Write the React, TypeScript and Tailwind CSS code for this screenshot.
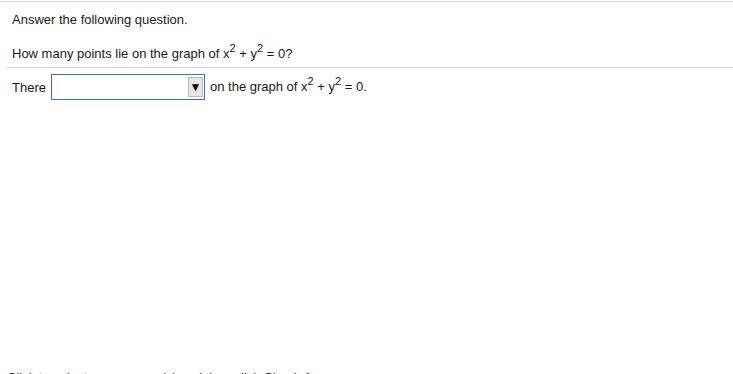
export default function App() {
  const sup = (t: string) => <sup className="text-[11px] relative -top-[1px] align-super leading-none">{t}</sup>;
  return (
    <div className="w-[733px] h-[374px] overflow-hidden bg-white text-[13px] text-[#1a1a1a]" style={{ fontFamily: '"Liberation Sans", Arial, sans-serif' }}>
      <div className="h-[1px] mt-[1px] bg-[#d3d3db]" />
      <div className="pl-[12px] pt-[10px] leading-[16px]">Answer the following question.</div>
      <div className="pl-[12px] pt-[16px] leading-[16px]">
        How many points lie on the graph of x{sup('2')} + y{sup('2')} = 0?
      </div>
      <div className="ml-[6px] mt-[5px] h-[1px] bg-[#d3d3db]" />
      <div className="flex items-center pl-[12px] pt-[6px]">
        <span>There</span>
        <div className="ml-[5px] w-[154px] h-[26px] border border-[#3a6fd0] flex items-center justify-end pr-[1px]">
          <div className="w-[15px] h-[20px] bg-[#e6e6e6] border border-[#b9b9b9] flex items-center justify-center text-[12px] text-black leading-none">
            ▼
          </div>
        </div>
        <span className="ml-[5px]">on the graph of x{sup('2')} + y{sup('2')} = 0.</span>
      </div>
      <div className="pl-[7px] mt-[270px] leading-[16px]">Click to select your answer(s) and then click Check Answer.</div>
    </div>
  );
}
